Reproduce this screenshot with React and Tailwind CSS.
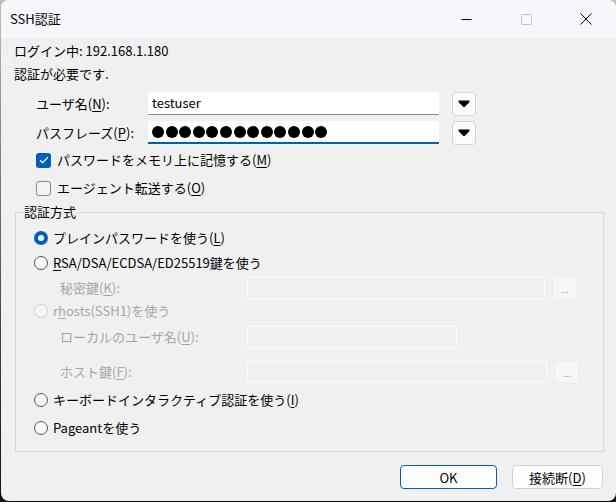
import React from 'react';

const font = { fontFamily: '"Noto Sans CJK JP", "Noto Sans", sans-serif' };

const U = ({ children }) => <span className="underline underline-offset-2">{children}</span>;

const DropButton = () => (
  <button className="ml-[13px] w-[24px] h-[24px] rounded-[4px] border border-[#d3d3d3] bg-[#fbfbfb] flex items-center justify-center">
    <svg width="12" height="8" viewBox="0 0 12 8">
      <path d="M0.5 0.5h11v1.8L6 7.5 0.5 2.3z" fill="#000" />
    </svg>
  </button>
);

const Checkbox = ({ checked, children, className = '' }) => (
  <div className={`flex items-center h-[20px] ml-[35px] ${className}`}>
    {checked ? (
      <span className="w-[15px] h-[15px] rounded-[3px] bg-[#005fb8] flex items-center justify-center">
        <svg width="10" height="8" viewBox="0 0 10 8">
          <path d="M1 4.2l2.6 2.4L9 1.2" fill="none" stroke="#fff" strokeWidth="1.2" />
        </svg>
      </span>
    ) : (
      <span className="w-[15px] h-[15px] rounded-[3px] border border-[#8a8a8a] bg-[#f3f3f3]" />
    )}
    <span className="ml-[6px]">{children}</span>
  </div>
);

const Radio = ({ selected, disabled, children, className = '' }) => (
  <div className={`flex items-center h-[20px] ml-[18px] ${className}`}>
    {selected ? (
      <span className="w-[14px] h-[14px] rounded-full bg-[#005fb8] flex items-center justify-center">
        <span className="w-[6px] h-[6px] rounded-full bg-white" />
      </span>
    ) : (
      <span
        className={`w-[14px] h-[14px] rounded-full border ${
          disabled ? 'border-[#cfcfcf] bg-[#f6f6f6]' : 'border-[#555] bg-[#f7f7f7]'
        }`}
      />
    )}
    <span className={`ml-[5px] ${disabled ? 'text-[#a6a6a6]' : ''}`}>{children}</span>
  </div>
);

const DisabledRow = ({ label, width, browse, className = '' }) => (
  <div className={`flex items-center ${className}`}>
    <span className="w-[187px] ml-[44px] text-[#a6a6a6]">{label}</span>
    <span className={`h-full border border-[#fbfbfb] bg-[#efefef] ${width}`} />
    {browse && (
      <span className="ml-[9px] w-[22px] h-[20px] rounded-[4px] bg-[#f7f7f7] text-[#9a9a9a] text-[9px] leading-none flex items-end justify-center pb-[4px]">
        ...
      </span>
    )}
  </div>
);

export default function App() {
  return (
    <div className="w-[616px] h-[502px] bg-gradient-to-b from-[#bdbdbd] to-[#111] pl-px pb-px">
      <div
        className="h-full rounded-lg overflow-hidden bg-[#f0f0f0] flex flex-col text-[13px] leading-[20px] text-black"
        style={font}
      >
        {/* Title bar */}
        <div className="h-[38px] shrink-0 bg-[#f6f7fa] flex items-center">
          <span className="ml-[9px]">SSH認証</span>
          <div className="ml-auto flex h-full">
            <div className="w-[60px] flex items-center justify-center">
              <svg width="11" height="11" viewBox="0 0 11 11">
                <path d="M0.5 5.5h10" stroke="#000" strokeWidth="1" />
              </svg>
            </div>
            <div className="w-[60px] flex items-center justify-center">
              <svg width="11" height="11" viewBox="0 0 11 11">
                <rect x="0.5" y="0.5" width="10" height="10" rx="1" fill="none" stroke="#c4c4c4" />
              </svg>
            </div>
            <div className="w-[60px] flex items-center justify-center">
              <svg width="12" height="12" viewBox="0 0 12 12">
                <path d="M0.5 0.5l11 11M11.5 0.5l-11 11" stroke="#000" strokeWidth="1" />
              </svg>
            </div>
          </div>
        </div>

        <div className="mt-[3px] ml-[13px]">ログイン中: 192.168.1.180</div>
        <div className="mt-[3px] ml-[13px]">認証が必要です.</div>

        <div className="mt-[8px] h-[23px] flex items-center">
          <span className="ml-[35px] w-[112px]">
            ユーザ名(<U>N</U>):
          </span>
          <span className="w-[291px] h-full bg-white border-b border-[#8a8a8a] flex items-center pl-[4px]">
            testuser
          </span>
          <DropButton />
        </div>

        <div className="mt-[6px] h-[23px] flex items-center">
          <span className="ml-[35px] w-[112px]">
            パスフレーズ(<U>P</U>):
          </span>
          <span className="w-[291px] h-full bg-white border-b-2 border-[#005fb8] flex items-center gap-[1.6px] pl-[4px] pt-[1px]">
            {Array.from({ length: 13 }).map((_, i) => (
              <span key={i} className="w-[12px] h-[12px] rounded-full bg-black" />
            ))}
          </span>
          <DropButton />
        </div>

        <Checkbox checked className="mt-[6px]">
          パスワードをメモリ上に記憶する(<U>M</U>)
        </Checkbox>
        <Checkbox className="mt-[8px]">
          エージェント転送する(<U>O</U>)
        </Checkbox>

        {/* Group box */}
        <div className="relative mt-[14px] ml-[14px] w-[589px] h-[240px] shrink-0 border border-[#d8d8d8]">
          <span className="absolute left-[7px] -top-[11px] px-px bg-[#f0f0f0]">認証方式</span>

          <Radio selected className="mt-[15px]">
            プレインパスワードを使う(<U>L</U>)
          </Radio>
          <Radio className="mt-[5px]">
            <U>R</U>SA/DSA/ECDSA/ED25519鍵を使う
          </Radio>
          <DisabledRow
            className="mt-[4px] h-[22px]"
            label={<>秘密鍵(<U>K</U>):</>}
            width="w-[298px]"
            browse
          />
          <Radio disabled className="mt-[2px]">
            r<U>h</U>osts(SSH1)を使う
          </Radio>
          <DisabledRow
            className="mt-[5px] h-[22px]"
            label={<>ローカルのユーザ名(<U>U</U>):</>}
            width="w-[210px]"
          />
          <DisabledRow
            className="mt-[13px] h-[21px]"
            label={<>ホスト鍵(<U>F</U>):</>}
            width="w-[300px]"
            browse
          />
          <Radio className="mt-[8px]">
            キーボードインタラクティブ認証を使う(<U>I</U>)
          </Radio>
          <Radio className="mt-[8px]">Pageantを使う</Radio>
        </div>

        <div className="mt-[13px] flex justify-end gap-[15px] pr-[13px]">
          <button className="w-[97px] h-[24px] rounded-[4px] border border-[#005fb8] bg-[#fdfdfd] leading-none">
            OK
          </button>
          <button className="w-[91px] h-[24px] rounded-[4px] border border-[#d0d0d0] bg-[#fdfdfd] leading-none">
            接続断(<U>D</U>)
          </button>
        </div>
      </div>
    </div>
  );
}
